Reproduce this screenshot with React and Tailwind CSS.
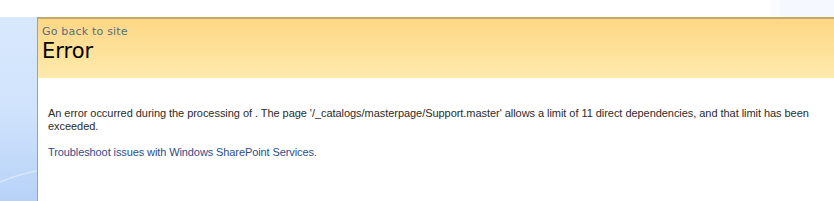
import React from 'react';

const App = () => {
  return (
    <div className="w-[834px] h-[201px] bg-white overflow-hidden flex flex-col">
      {/* top strip */}
      <div className="h-[17px] flex shrink-0">
        <div className="flex-1" />
        <div className="w-[10px] bg-[#fcfbff]" />
        <div className="w-[54px] bg-[#f5f8fe]" />
      </div>

      <div className="flex flex-1">
        {/* left nav column */}
        <div className="w-[38px] shrink-0 border-r border-[#7aa7e3] bg-gradient-to-b from-[#d8e9fd] via-[#d0e3fc] to-[#b7d2f8] relative overflow-hidden">
          <svg className="absolute left-0 top-[135px]" width="37" height="40" viewBox="0 0 37 40">
            <path d="M0 30 C12 25 24 21 37 19" stroke="#e3eefd" strokeWidth="1.5" fill="none" opacity="0.7" />
          </svg>
        </div>

        {/* main */}
        <div className="flex-1 flex flex-col">
          <div className="h-[61px] border-t-2 border-[#c2a96f] bg-gradient-to-b from-[#fdd783] to-[#fdeaad] px-[4px] pt-[6px]">
            <div className="text-[11px] leading-[14px] tracking-[0.2px] text-[#5a6a86] font-['DejaVu_Sans',sans-serif]">Go back to site</div>
            <div className="text-[21px] leading-[25px] text-black font-['DejaVu_Sans',sans-serif]">Error</div>
          </div>

          <div className="px-[10px] pt-[29px] font-['Liberation_Sans',Arial,sans-serif] text-[11px] leading-[13px]">
            <p className="text-[#2b2b2b] tracking-[-0.05px]">
              An error occurred during the processing of . The page '/_catalogs/masterpage/Support.master' allows a limit of 11 direct dependencies, and that limit has been exceeded.
            </p>
            <p className="mt-[13px]">
              <a className="text-[#2c4d88] tracking-[-0.1px]">Troubleshoot issues with Windows SharePoint Services.</a>
            </p>
          </div>
        </div>
      </div>
    </div>
  );
};

export default App;
